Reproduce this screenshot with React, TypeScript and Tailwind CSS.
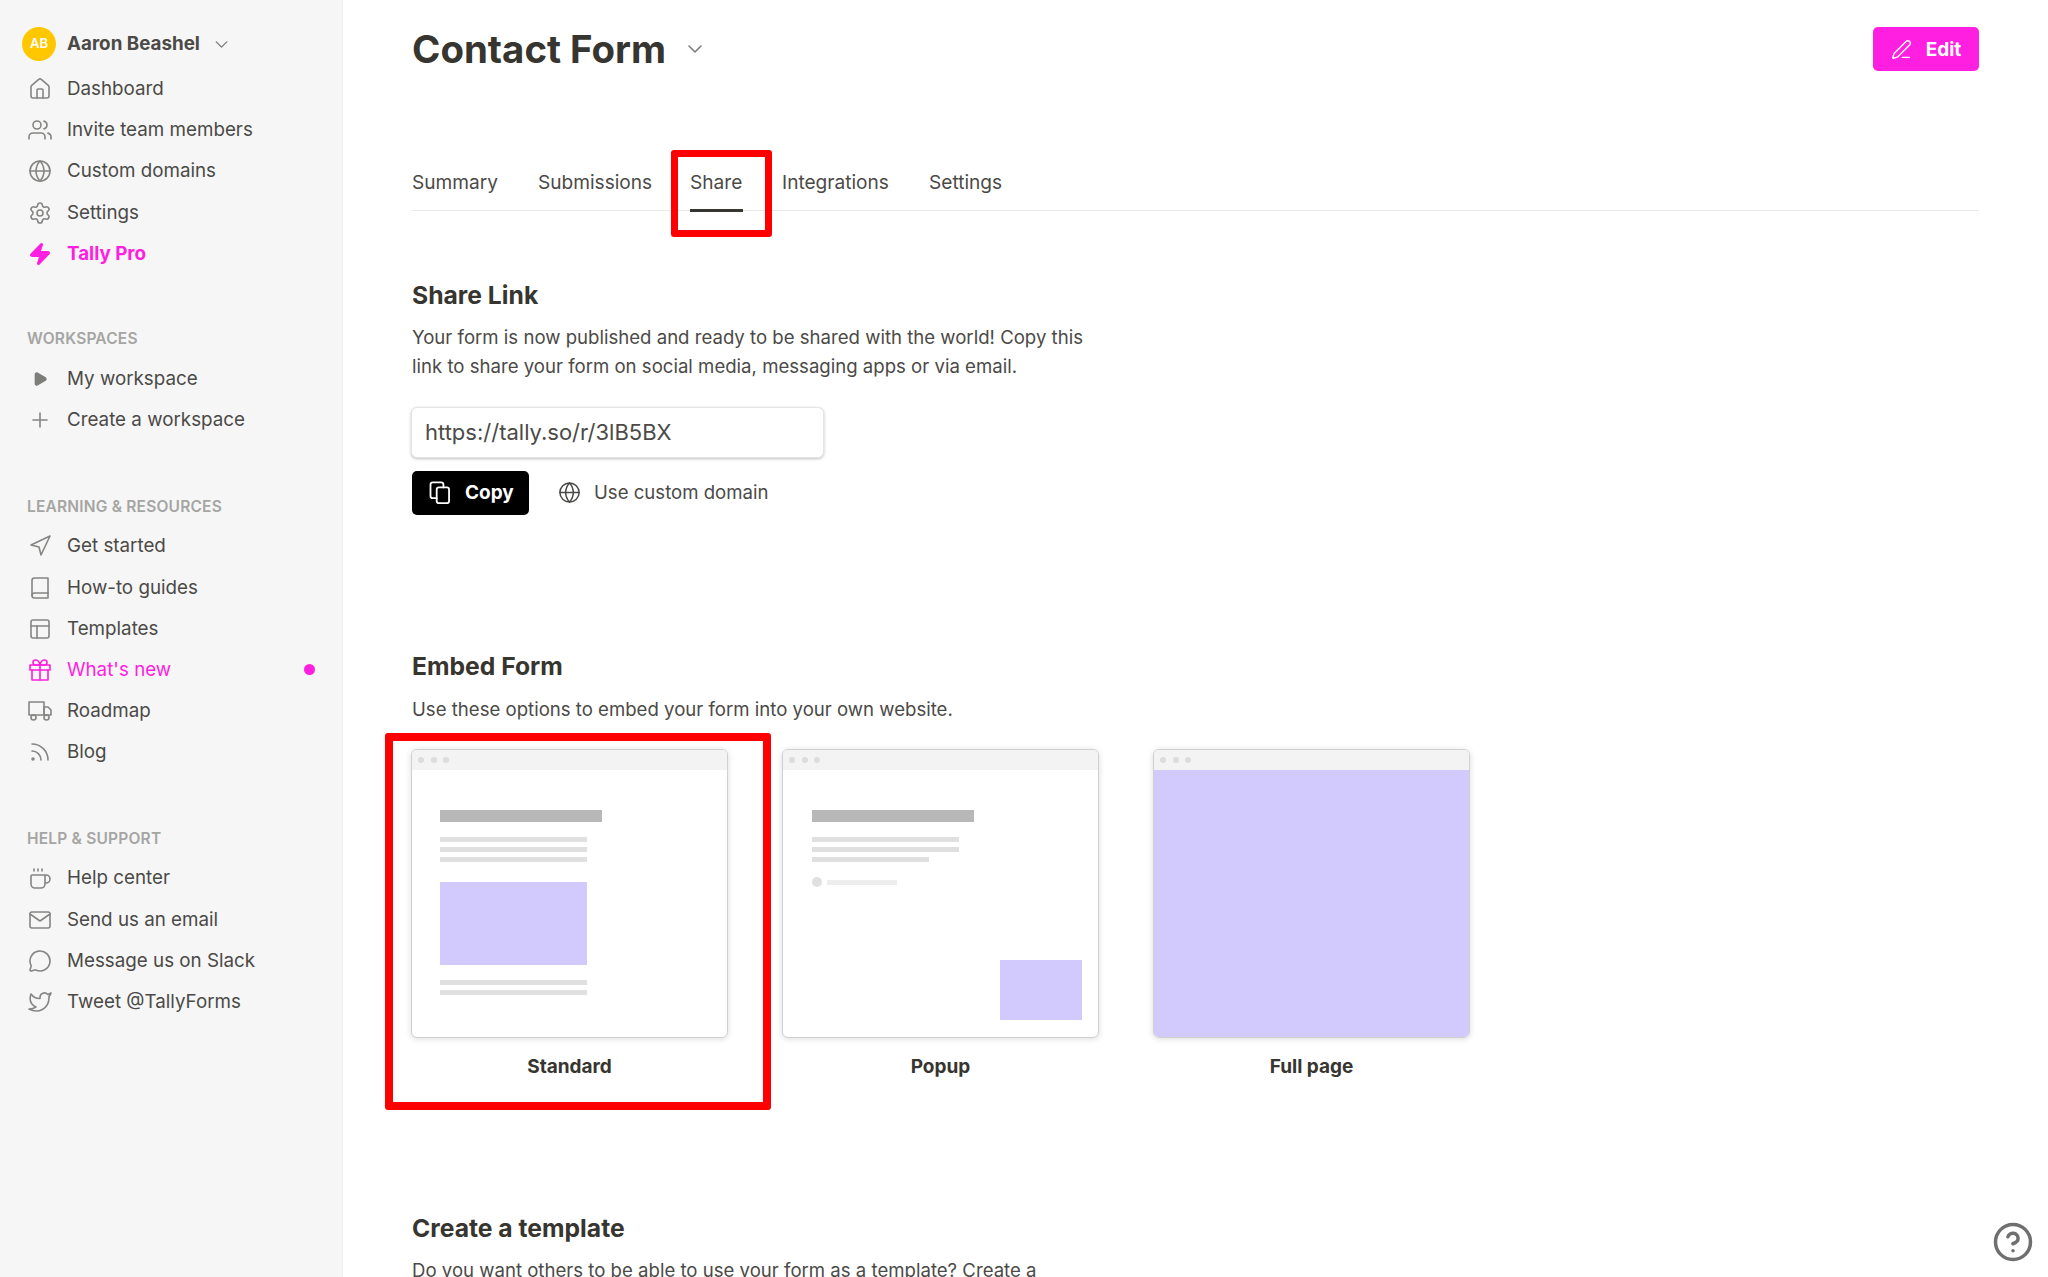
import React from "react";
import { FiUsers, FiGlobe, FiPlus, FiNavigation, FiBook, FiLayout, FiGift, FiTruck, FiRss, FiMail, FiTwitter, FiChevronDown, FiHelpCircle } from "react-icons/fi";
import { House, Settings, Zap, Play, Coffee, PenLine, MessageCircle } from "lucide-react";

type NavItem = { icon: React.ReactNode; label: string; pink?: boolean; bold?: boolean; dot?: boolean };

const ic = "w-[24px] h-[24px] text-[#858583] stroke-[1.6]";
const icl = "w-[24px] h-[24px] text-[#858583] stroke-[1.6]";

function Row({ icon, label, pink, bold, dot }: NavItem) {
  return (
    <div className={`flex items-center h-[41.2px] pl-[28px] pr-[27px] text-[18.8px] ${pink ? "text-[#ff1fe0]" : "text-[#4b4a47]"} ${bold ? "font-bold" : "font-normal"}`}>
      <span className="w-[24px] flex justify-center shrink-0">{icon}</span>
      <span className="ml-[15px] whitespace-nowrap">{label}</span>
      {dot && <span className="ml-auto w-[11px] h-[11px] rounded-full bg-[#ff1fe0]" />}
    </div>
  );
}

function Label({ children, className }: { children: React.ReactNode; className: string }) {
  return <div className={`pl-[27px] text-[15.5px] tracking-[0.2px] leading-[20px] font-semibold text-[#a5a5a3] ${className}`}>{children}</div>;
}

function Chrome({ children, bodyClass }: { children?: React.ReactNode; bodyClass: string }) {
  return (
    <div className="w-[317px] h-[289px] flex flex-col rounded-[6px] border border-[#d0d0cf] shadow-[0_1px_6px_rgba(0,0,0,0.14)] overflow-hidden bg-white">
      <div className="h-[20px] bg-[#f3f3f3] flex items-center gap-[6.5px] pl-[6px] shrink-0">
        <span className="w-[6px] h-[6px] rounded-full bg-[#dcdcdc]" />
        <span className="w-[6px] h-[6px] rounded-full bg-[#dcdcdc]" />
        <span className="w-[6px] h-[6px] rounded-full bg-[#dcdcdc]" />
      </div>
      <div className={bodyClass}>{children}</div>
    </div>
  );
}

function TextLines() {
  return (
    <div className="flex flex-col gap-[5px] mt-[15px]">
      <div className="w-[147px] h-[5px] bg-[#e0e0e0]" />
      <div className="w-[147px] h-[5px] bg-[#e0e0e0]" />
    </div>
  );
}

function Thumb({ title, children }: { title: string; children: React.ReactNode }) {
  return (
    <div className="w-[317px] flex flex-col items-center">
      {children}
      <div className="mt-[17px] text-[19px] leading-[24px] font-bold text-[#37352f]">{title}</div>
    </div>
  );
}

export default function App() {
  return (
    <div className="relative flex w-[2048px] h-[1277px] overflow-hidden bg-white font-['Inter','Liberation_Sans',sans-serif]">
      <aside className="w-[343px] shrink-0 h-full bg-[#f6f6f6] border-r border-[#efefef] pt-[23px]">
        <div className="flex items-center h-[42px] mb-[3.5px] pl-[22px] text-[18.8px] font-bold text-[#4b4a47]">
          <span className="w-[34px] h-[34px] rounded-full bg-[#ffc700] text-white text-[13px] font-semibold flex items-center justify-center">AB</span>
          <span className="ml-[11px]">Aaron Beashel</span>
          <FiChevronDown className="ml-[11px] w-[21px] h-[21px] text-[#7d7d7a] stroke-[1.6]" />
        </div>
        <Row icon={<House className={icl} />} label="Dashboard" />
        <Row icon={<FiUsers className={ic} />} label="Invite team members" />
        <Row icon={<FiGlobe className={ic} />} label="Custom domains" />
        <Row icon={<Settings className={icl} />} label="Settings" />
        <Row icon={<Zap className="w-[24px] h-[24px] text-[#ff1fe0] fill-[#ff1fe0]" />} label="Tally Pro" pink bold />

        <Label className="mt-[55px]">WORKSPACES</Label>
        <div className="mt-[9px]">
          <Row icon={<Play className="w-[16px] h-[16px] text-[#7d7d7a] fill-[#7d7d7a]" />} label="My workspace" />
          <Row icon={<FiPlus className={ic} />} label="Create a workspace" />
        </div>

        <Label className="mt-[56px]">LEARNING &amp; RESOURCES</Label>
        <div className="mt-[9px]">
          <Row icon={<FiNavigation className={ic} />} label="Get started" />
          <Row icon={<FiBook className={ic} />} label="How-to guides" />
          <Row icon={<FiLayout className={ic} />} label="Templates" />
          <Row icon={<FiGift className="w-[24px] h-[24px] text-[#ff1fe0] stroke-[1.6]" />} label="What's new" pink dot />
          <Row icon={<FiTruck className={ic} />} label="Roadmap" />
          <Row icon={<FiRss className={ic} />} label="Blog" />
        </div>

        <Label className="mt-[56px]">HELP &amp; SUPPORT</Label>
        <div className="mt-[9px]">
          <Row icon={<Coffee className={icl} />} label="Help center" />
          <Row icon={<FiMail className={ic} />} label="Send us an email" />
          <Row icon={<MessageCircle className={icl} />} label="Message us on Slack" />
          <Row icon={<FiTwitter className={ic} />} label="Tweet @TallyForms" />
        </div>
      </aside>

      <main className="flex-1 min-w-0 pl-[69px] pr-[69px] text-[#37352f]">
        <div className="flex items-center justify-between pt-[27px] h-[71px]">
          <div className="flex items-center">
            <h1 className="text-[38.4px] leading-[46px] font-bold">Contact Form</h1>
            <FiChevronDown className="ml-[17px] w-[24px] h-[24px] text-[#7d7d7a] stroke-[1.6]" />
          </div>
          <button className="w-[106px] h-[44px] rounded-[5px] bg-[#ff1fe0] text-white text-[19px] font-bold flex items-center justify-center gap-[14px]">
            <PenLine className="w-[21px] h-[21px] stroke-[1.6]" />
            <span className="pt-[2px]">Edit</span>
          </button>
        </div>

        <nav className="mt-[89px] h-[51px] border-b border-[#e9e9e8] flex text-[19.1px] text-[#4b4a47]">
          <div className="w-[126px] pt-[8px]">Summary</div>
          <div className="w-[152px] pt-[8px]">Submissions</div>
          <div className="w-[92px] pt-[8px]"><span className="block w-[53px] h-[44px] border-b-[3px] border-[#37352f]">Share</span></div>
          <div className="w-[147px] pt-[8px]">Integrations</div>
          <div className="pt-[8px]">Settings</div>
        </nav>

        <section className="mt-[68px]">
          <h2 className="text-[24.7px] leading-[32px] font-bold">Share Link</h2>
          <p className="mt-[12px] w-[700px] text-[18.6px] leading-[29.4px] text-[#4b4a47]">
            Your form is now published and ready to be shared with the world! Copy this link to share your form on social media, messaging apps or via email.
          </p>
          <div className="mt-[25px] -ml-[1px] w-[413px] h-[51px] rounded-[6px] bg-white border border-[#e4e4e3] shadow-[0_1px_3px_rgba(0,0,0,0.25)] flex items-center pl-[13px] text-[22px] text-[#4b4a47]">
            https://tally.so/r/3lB5BX
          </div>
          <div className="mt-[13px] flex items-center">
            <button className="w-[117px] h-[44px] rounded-[5px] bg-black text-white text-[19px] font-bold flex items-center pl-[14px] gap-[12px]">
              <svg viewBox="0 0 24 24" className="w-[27px] h-[27px]" fill="none" stroke="currentColor" strokeWidth="1.6" strokeLinecap="round" strokeLinejoin="round">
                <rect x="9.5" y="7.5" width="11" height="14" rx="2" />
                <path d="M15.5 7.5V5a2 2 0 0 0-2-2H6a2 2 0 0 0-2 2v10a2 2 0 0 0 2 2h3.5" />
              </svg>
              <span>Copy</span>
            </button>
            <FiGlobe className="ml-[29px] w-[23px] h-[23px] text-[#4b4a47] stroke-[1.6]" />
            <span className="ml-[13px] text-[18.6px] text-[#4b4a47]">Use custom domain</span>
          </div>
        </section>

        <section className="mt-[135.5px]">
          <h2 className="text-[24.7px] leading-[32px] font-bold">Embed Form</h2>
          <p className="mt-[11.5px] text-[18.6px] leading-[30px] text-[#4b4a47]">Use these options to embed your form into your own website.</p>
          <div className="mt-[25.5px] -ml-[1px] flex gap-[54px]">
            <Thumb title="Standard">
              <Chrome bodyClass="flex-1 pl-[28px] pt-[40px]">
                <div className="w-[162px] h-[12px] bg-[#b8b8b8]" />
                <div className="flex flex-col gap-[5px] mt-[15px]">
                  <div className="w-[147px] h-[5px] bg-[#e0e0e0]" />
                  <div className="w-[147px] h-[5px] bg-[#e0e0e0]" />
                  <div className="w-[147px] h-[5px] bg-[#e0e0e0]" />
                </div>
                <div className="mt-[20px] w-[147px] h-[83px] bg-[#d2c9fd]" />
                <div className="mt-[7px]"><TextLines /></div>
              </Chrome>
            </Thumb>
            <Thumb title="Popup">
              <Chrome bodyClass="flex-1 flex flex-col pl-[29px] pr-[16px] pt-[40px] pb-[17px]">
                <div className="w-[162px] h-[12px] bg-[#b8b8b8]" />
                <div className="flex flex-col gap-[5px] mt-[15px]">
                  <div className="w-[147px] h-[5px] bg-[#e0e0e0]" />
                  <div className="w-[147px] h-[5px] bg-[#e0e0e0]" />
                  <div className="w-[117px] h-[5px] bg-[#e0e0e0]" />
                </div>
                <div className="mt-[15px] flex items-center gap-[5px]">
                  <span className="w-[10px] h-[10px] rounded-full bg-[#e0e0e0]" />
                  <span className="w-[70px] h-[5px] bg-[#ededed]" />
                </div>
                <div className="mt-auto self-end w-[82px] h-[60px] bg-[#d2c9fd]" />
              </Chrome>
            </Thumb>
            <Thumb title="Full page">
              <Chrome bodyClass="flex-1 bg-[#d2c9fd]" />
            </Thumb>
          </div>
        </section>

        <section className="mt-[133px]">
          <h2 className="text-[24.7px] leading-[32px] font-bold">Create a template</h2>
          <p className="mt-[12px] w-[700px] text-[18.6px] leading-[29.4px] text-[#4b4a47]">
            Do you want others to be able to use your form as a template? Create a
          </p>
        </section>
      </main>

      <div className="absolute left-[671px] top-[150px] w-[101px] h-[87px] border-[7px] border-[#ff0000] rounded-[3px]" />
      <div className="absolute left-[385px] top-[733px] w-[386px] h-[377px] border-[8px] border-[#ff0000] rounded-[3px]" />
      <FiHelpCircle className="absolute left-[1992px] top-[1221px] w-[42px] h-[42px] text-[#6f6f6f]" />
    </div>
  );
}
